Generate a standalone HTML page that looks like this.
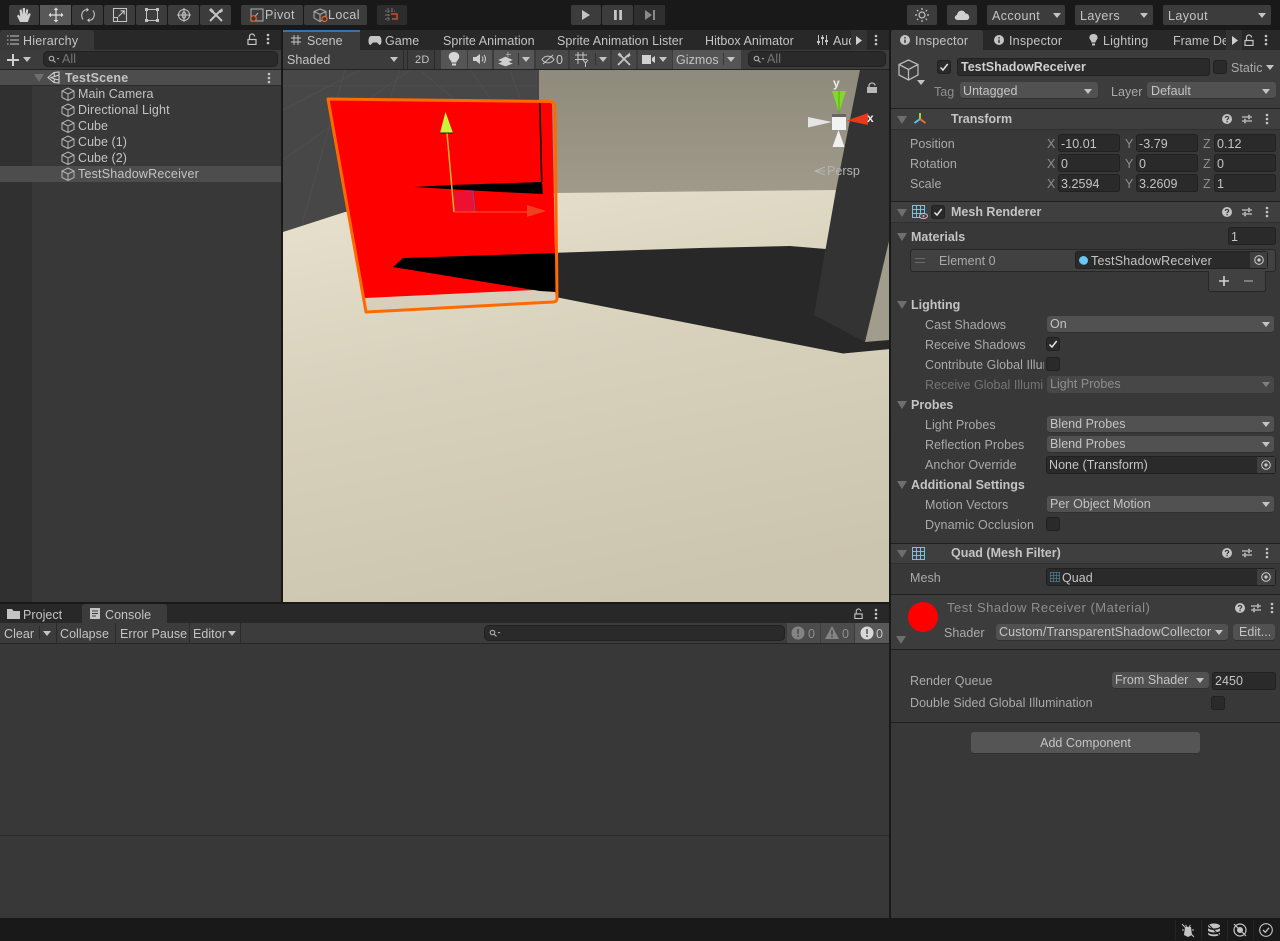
<!DOCTYPE html>
<html><head><meta charset="utf-8"><title>Unity Editor</title>
<style>
html,body{margin:0;padding:0;background:#191919}
#r{position:relative;width:1280px;height:941px;overflow:hidden;background:#191919;font-family:"Liberation Sans",sans-serif}
#r div,#r svg,#r span.a{position:absolute}
.t{position:absolute;white-space:nowrap;font-size:12.5px;line-height:16px;letter-spacing:.04px;color:#c4c4c4}
.w{letter-spacing:.42px}
.u{letter-spacing:.2px}
.b{font-weight:bold;letter-spacing:0}
.d{color:#757575}
.m{color:#8f8f8f}
.btn{background:#3c3c3c;border-radius:2px}
.dd{background:#515151;border-radius:3px;box-shadow:inset 0 -1px 0 #303030}
.fd{background:#2a2a2a;border-radius:3px;box-shadow:inset 0 0 0 1px #212121}
.cb{background:#2a2a2a;border-radius:3px;box-shadow:inset 0 0 0 1px #212121;width:14px;height:14px}
.c{width:0;height:0;border-left:4.5px solid transparent;border-right:4.5px solid transparent;border-top:5px solid #c4c4c4}
.f{width:0;height:0;border-left:5px solid transparent;border-right:5px solid transparent;border-top:8px solid #6e6e6e}
.ln{height:1px;background:#1f1f1f}
svg{overflow:visible}
</style></head><body><div id="r">
<svg width="0" height="0" style="left:0;top:0">
<defs>
<symbol id="cube" viewBox="0 0 14 14"><path d="M7 1 L13 4 V10.5 L7 13.5 L1 10.5 V4 Z M1 4 L7 7 L13 4 M7 7 V13.5" fill="none" stroke="#b8b8b8" stroke-width="1"/></symbol>
<symbol id="kb" viewBox="0 0 4 12"><circle cx="2" cy="2" r="1.3" fill="#c4c4c4"/><circle cx="2" cy="6" r="1.3" fill="#c4c4c4"/><circle cx="2" cy="10" r="1.3" fill="#c4c4c4"/></symbol>
<symbol id="lock" viewBox="0 0 12 12"><path d="M2 6.5h8v5H2z" fill="none" stroke="#c4c4c4" stroke-width="1.2"/><path d="M3.5 6.5V3.5a2.5 2.5 0 0 1 5 0" fill="none" stroke="#c4c4c4" stroke-width="1.2"/></symbol>
<symbol id="help" viewBox="0 0 10 10"><circle cx="5" cy="5" r="5" fill="#c4c4c4"/><path d="M3.3 3.8C3.4 1.9 6.8 2 6.7 3.9C6.6 5 5 5 5 6.2" fill="none" stroke="#383838" stroke-width="1.2"/><rect x="4.4" y="7" width="1.3" height="1.3" fill="#383838"/></symbol>
<symbol id="pre" viewBox="0 0 10 10"><path d="M0 3H6M8 3H10M0 7H2M4 7H10" stroke="#c4c4c4" stroke-width="1.2"/><path d="M7 .8V5.2M3 4.8V9.2" stroke="#c4c4c4" stroke-width="1.6"/></symbol>
<symbol id="pick" viewBox="0 0 10 10"><circle cx="5" cy="5" r="4.3" fill="none" stroke="#c4c4c4" stroke-width="1.1"/><circle cx="5" cy="5" r="1.7" fill="#c4c4c4"/></symbol>
<symbol id="mesh" viewBox="0 0 13 13"><path d="M.5.5h12v12H.5zM4.5.5v12M8.5.5v12M.5 4.5h12M.5 8.5h12" fill="none" stroke="#6cc4f5" stroke-width="1"/></symbol>
<symbol id="chk" viewBox="0 0 10 10"><path d="M1.5 5.5L4 8L8.7 2" fill="none" stroke="#e4e4e4" stroke-width="1.5"/></symbol>
<symbol id="srch" viewBox="0 0 12 8"><circle cx="3.5" cy="3.5" r="2.2" fill="none" stroke="#aaa" stroke-width="1.2"/><path d="M5 5L7.5 7.5" stroke="#aaa" stroke-width="1.2"/><path d="M8.5 3h3L10 4.6z" fill="#aaa"/></symbol>
</defs></svg>

<!-- Top toolbar -->
<div class="btn" style="left:9px;top:5px;width:30px;height:20px"></div>
<div style="left:40px;top:5px;width:31px;height:20px;background:#585858"></div>
<div class="btn" style="left:72px;top:5px;width:31px;height:20px"></div>
<div class="btn" style="left:104px;top:5px;width:31px;height:20px"></div>
<div class="btn" style="left:136px;top:5px;width:31px;height:20px"></div>
<div class="btn" style="left:168px;top:5px;width:31px;height:20px"></div>
<div class="btn" style="left:200px;top:5px;width:31px;height:20px"></div>
<svg style="left:16px;top:7px" width="16" height="16" viewBox="0 0 16 16"><path d="M4 15 L1 9 L2.500 7.500 L4.300 9.500 L3.500 3 L5.500 2.300 L6.500 7.500 L6.800 1 L9 1 L9.200 7.500 L10.500 2 L12.300 2.700 L11.300 8.800 L13 6 L14.800 7 L11.800 15 Z" fill="#d0d0d0"/></svg>
<svg style="left:48px;top:7px" width="16" height="16" viewBox="0 0 16 16"><path d="M8 0.5L10.3 3H5.7ZM8 15.5L5.7 13H10.3ZM.5 8L3 5.7V10.3ZM15.5 8L13 10.3V5.7Z" fill="#e0e0e0"/><path d="M8 3V13M3 8H13" stroke="#e0e0e0" stroke-width="1.2"/></svg>
<svg style="left:80px;top:7px" width="16" height="16" viewBox="0 0 16 16"><path d="M3 12.500C0 8 2.500 3 7 2.500M13 3.500C16 8 13.500 13 9 13.500" fill="none" stroke="#c4c4c4" stroke-width="1.100"/><path d="M6.500 .5L9 2.700L6.500 5ZM9.500 11L7 13.300L9.500 15.500Z" fill="#c4c4c4"/></svg>
<svg style="left:112px;top:7px" width="16" height="16" viewBox="0 0 16 16"><path d="M1.500 1.500H14.500V14.500H1.500Z M1.500 10.500H5.500V14.500" fill="none" stroke="#c4c4c4" stroke-width="1.100"/><path d="M6.500 9.500L12 4M8.500 3.800H12.200V7.500" fill="none" stroke="#c4c4c4" stroke-width="1.200"/></svg>
<svg style="left:145px;top:8px" width="14" height="14" viewBox="0 0 14 14"><path d="M1.500 1.500H12.500V12.500H1.500Z" fill="none" stroke="#c4c4c4"/><path d="M0 0h3v3H0zM11 0h3v3h-3zM0 11h3v3H0zM11 11h3v3h-3z" fill="#c4c4c4"/></svg>
<svg style="left:176px;top:7px" width="16" height="16" viewBox="0 0 16 16"><circle cx="8" cy="8" r="5.500" fill="none" stroke="#c4c4c4"/><path d="M8 1V15M1 8H15" stroke="#c4c4c4"/><path d="M8 4.500C10.500 6 10.500 10 8 11.500C5.500 10 5.500 6 8 4.500" fill="none" stroke="#c4c4c4"/></svg>
<svg style="left:208px;top:7px" width="16" height="16" viewBox="0 0 16 16"><path d="M2 14L13 3M3 3L14 14" stroke="#c4c4c4" stroke-width="2"/><path d="M1 3L3 1L6 4L4 6ZM11 5L14 1L15 4L12.500 6Z" fill="#c4c4c4"/></svg>

<div class="btn" style="left:241px;top:5px;width:62px;height:20px"></div>
<div class="btn" style="left:304px;top:5px;width:63px;height:20px"></div>
<svg style="left:250px;top:8px" width="14" height="14" viewBox="0 0 14 14"><path d="M1 1H13V13H1Z" fill="none" stroke="#b0b0b0"/><path d="M1 13L8 5" stroke="#b0b0b0"/><circle cx="3.500" cy="10.500" r="2.800" fill="#383838" stroke="#e8642c" stroke-width="1.200"/></svg>
<span class="t w" style="left:265px;top:7px">Pivot</span>
<svg style="left:313px;top:8px" width="16" height="15" viewBox="0 0 16 15"><path d="M7 1L13 3.500V10L7 13.500L1 10V3.500ZM1 3.500L7 6.500L13 3.500M7 6.500V13.500" fill="none" stroke="#b0b0b0"/><circle cx="11.500" cy="11" r="2.500" fill="#383838" stroke="#e8642c" stroke-width="1.200"/></svg>
<span class="t w" style="left:328px;top:7px">Local</span>
<div style="left:377px;top:5px;width:30px;height:20px;background:#2c2c2c;border-radius:2px"></div>
<svg style="left:385px;top:8px" width="14" height="14" viewBox="0 0 14 14"><path d="M3 0V13M7 0V4M0 3H10M0 7H5M0 11H5" stroke="#777" stroke-dasharray="2 1"/><path d="M6 6H12V11H7" fill="none" stroke="#c2542a" stroke-width="1.500"/></svg>

<div class="btn" style="left:571px;top:5px;width:30px;height:20px"></div>
<div class="btn" style="left:602px;top:5px;width:31px;height:20px"></div>
<div style="left:634px;top:5px;width:31px;height:20px;background:#2f2f2f"></div>
<svg style="left:581px;top:10px" width="10" height="10" viewBox="0 0 10 10"><path d="M1 0L9 5L1 10Z" fill="#c4c4c4"/></svg>
<svg style="left:613px;top:10px" width="10" height="10" viewBox="0 0 10 10"><path d="M1 0H3.800V10H1ZM6.200 0H9V10H6.200Z" fill="#c4c4c4"/></svg>
<svg style="left:645px;top:10px" width="11" height="10" viewBox="0 0 11 10"><path d="M0 0L7 5L0 10ZM8 0H10V10H8Z" fill="#8a8a8a"/></svg>

<div class="btn" style="left:907px;top:5px;width:30px;height:20px"></div>
<svg style="left:915px;top:8px" width="14" height="14" viewBox="0 0 14 14"><circle cx="7" cy="7" r="3" fill="none" stroke="#c4c4c4" stroke-width="1.200"/><path d="M7 0V2M7 12V14M0 7H2M12 7H14M2 2L3.300 3.300M10.700 10.700L12 12M2 12L3.300 10.700M10.700 3.300L12 2" stroke="#c4c4c4" stroke-width="1.200"/></svg>
<div class="btn" style="left:947px;top:5px;width:30px;height:20px"></div>
<svg style="left:954px;top:9px" width="16" height="11" viewBox="0 0 16 11"><path d="M3.500 11C0 11 0 6.500 3 6C3.500 1 10 0 11.500 4.500C15.500 4 17 11 12.500 11Z" fill="#d0d0d0"/></svg>
<div class="btn" style="left:987px;top:5px;width:78px;height:20px"></div>
<span class="t w" style="left:992px;top:8px">Account</span><div class="c" style="left:1053px;top:13px"></div>
<div class="btn" style="left:1075px;top:5px;width:78px;height:20px"></div>
<span class="t w" style="left:1080px;top:8px">Layers</span><div class="c" style="left:1140px;top:13px"></div>
<div class="btn" style="left:1163px;top:5px;width:108px;height:20px"></div>
<span class="t w" style="left:1168px;top:8px">Layout</span><div class="c" style="left:1258px;top:13px"></div>

<!-- Hierarchy panel -->
<div style="left:0;top:30px;width:281px;height:20px;background:#282828"></div>
<div style="left:0;top:30px;width:94px;height:20px;background:#383838;border-radius:3px 3px 0 0"></div>
<svg style="left:7px;top:35px" width="12" height="10" viewBox="0 0 12 10"><path d="M3 1H12M3 5H12M3 9H12M0 1H1.500M0 5H1.500M0 9H1.500" stroke="#c4c4c4"/></svg>
<span class="t u" style="left:23px;top:33px">Hierarchy</span>
<svg style="left:246px;top:33px" width="12" height="12"><use href="#lock"/></svg>
<svg style="left:266px;top:33px" width="4" height="12"><use href="#kb"/></svg>
<div style="left:0;top:50px;width:281px;height:20px;background:#3c3c3c"></div>
<div style="left:0;top:69px;width:281px;height:1px;background:#232323"></div>
<svg style="left:7px;top:54px" width="12" height="12" viewBox="0 0 12 12"><path d="M6 0V12M0 6H12" stroke="#d0d0d0" stroke-width="2"/></svg>
<div class="c" style="left:23px;top:57px;"></div>
<div class="fd" style="left:43px;top:51px;width:235px;height:16px;border-radius:5px"></div>
<svg style="left:48px;top:55px" width="12" height="8"><use href="#srch"/></svg>
<span class="t d" style="left:62px;top:51px">All</span>
<div style="left:0;top:70px;width:281px;height:532px;background:#383838"></div>
<div style="left:0;top:86px;width:32px;height:516px;background:#303030"></div>
<div style="left:0;top:70px;width:281px;height:15px;background:#4d4d4d"></div>
<div style="left:0;top:85px;width:281px;height:1px;background:#2a2a2a"></div>
<div style="left:0;top:166px;width:281px;height:16px;background:#4d4d4d"></div>
<div class="f" style="left:34px;top:74px"></div>
<svg style="left:47px;top:71px" width="13" height="13" viewBox="0 0 13 13"><path d="M1 6.500L7 1.500L12 1V12L7 11.500ZM7 1.500L7.500 5.500L12 4M7.500 5.500L4 6.500L7.500 8L12 9M7.500 8L7 11.500" fill="none" stroke="#d4d4d4" stroke-width="1.100"/></svg>
<span class="t b" style="left:65px;top:70px;letter-spacing:.2px">TestScene</span>
<svg style="left:267px;top:72px" width="4" height="12"><use href="#kb"/></svg>
<svg style="left:61px;top:87px" width="14" height="14"><use href="#cube"/></svg><span class="t" style="left:78px;top:86px">Main Camera</span>
<svg style="left:61px;top:103px" width="14" height="14"><use href="#cube"/></svg><span class="t" style="left:78px;top:102px;letter-spacing:.12px">Directional Light</span>
<svg style="left:61px;top:119px" width="14" height="14"><use href="#cube"/></svg><span class="t" style="left:78px;top:118px">Cube</span>
<svg style="left:61px;top:135px" width="14" height="14"><use href="#cube"/></svg><span class="t" style="left:78px;top:134px">Cube (1)</span>
<svg style="left:61px;top:151px" width="14" height="14"><use href="#cube"/></svg><span class="t" style="left:78px;top:150px">Cube (2)</span>
<svg style="left:61px;top:167px" width="14" height="14"><use href="#cube"/></svg><span class="t u" style="left:78px;top:166px">TestShadowReceiver</span>

<!-- Scene tabs -->
<div style="left:283px;top:30px;width:606px;height:20px;background:#282828"></div>
<div style="left:283px;top:30px;width:77px;height:20px;background:#3c3c3c;border-top:2px solid #3a72b0;box-sizing:border-box"></div>
<svg style="left:291px;top:35px" width="10" height="10" viewBox="0 0 10 10"><path d="M3 0V10M7 0V10M0 3H10M0 7H10" stroke="#c4c4c4"/></svg>
<span class="t" style="left:307px;top:33px">Scene</span>
<svg style="left:368px;top:36px" width="14" height="9" viewBox="0 0 14 9"><path d="M3 0H11C14 0 14.500 9 11.500 9L9 6.500H5L2.500 9C-.5 9 0 0 3 0Z" fill="#c4c4c4"/></svg>
<span class="t" style="left:385px;top:33px">Game</span>
<span class="t" style="left:443px;top:33px">Sprite Animation</span>
<span class="t" style="left:557px;top:33px">Sprite Animation Lister</span>
<span class="t" style="left:705px;top:33px">Hitbox Animator</span>
<svg style="left:817px;top:35px" width="11" height="10" viewBox="0 0 11 10"><path d="M1.500 0V10M5.500 0V10M9.500 0V10" stroke="#c4c4c4"/><path d="M0 6H3V8H0ZM4 2H7V4H4ZM8 5H11V7H8Z" fill="#c4c4c4"/></svg>
<span class="t" style="left:833px;top:33px;width:18px;overflow:hidden">Audio</span>
<div style="left:851px;top:30px;width:16px;height:20px;background:#333"></div>
<svg style="left:856px;top:36px" width="6" height="9" viewBox="0 0 6 9"><path d="M0 0L6 4.500L0 9Z" fill="#d0d0d0"/></svg>
<svg style="left:874px;top:34px" width="4" height="12"><use href="#kb"/></svg>

<!-- Scene toolbar -->
<div style="left:283px;top:50px;width:606px;height:20px;background:#3c3c3c"></div>
<span class="t" style="left:287px;top:52px">Shaded</span><div class="c" style="left:390px;top:57px"></div>
<div style="left:403px;top:50px;width:1px;height:19px;background:#2a2a2a"></div>
<div style="left:407px;top:50px;width:28px;height:19px;background:#3c3c3c;border-left:1px solid #2a2a2a;border-right:1px solid #2a2a2a;box-sizing:border-box"></div>
<span class="t" style="left:415px;top:52px;font-size:11px;letter-spacing:.2px">2D</span>
<div style="left:441px;top:50px;width:26px;height:19px;background:#555"></div>
<svg style="left:448px;top:52px" width="12" height="14" viewBox="0 0 12 14"><path d="M6 0C2 0 0 3 1 6C1.500 8 3.500 8.500 3.500 10.500H8.500C8.500 8.500 10.500 8 11 6C12 3 10 0 6 0ZM4 11.500H8V13.500H4Z" fill="#d6d6d6"/></svg>
<div style="left:468px;top:50px;width:24px;height:19px;background:#555"></div>
<svg style="left:473px;top:53px" width="14" height="12" viewBox="0 0 14 12"><path d="M0 4H3L7 1V11L3 8H0Z" fill="#d0d0d0"/><path d="M9 3.500Q11 6 9 8.500M11 2Q14 6 11 10" fill="none" stroke="#d0d0d0"/></svg>
<div style="left:494px;top:50px;width:40px;height:19px;background:#555"></div>
<svg style="left:498px;top:52px" width="15" height="14" viewBox="0 0 15 14"><path d="M7.500 5L14 8L7.500 11L1 8ZM7.500 9L14 11.500L7.500 14L1 11.500Z M10 0V5M8 2.500H13" fill="#d0d0d0" stroke="#d0d0d0" stroke-width=".6"/></svg>
<div style="left:518px;top:53px;width:1px;height:12px;background:#333"></div>
<div class="c" style="left:522px;top:57px"></div>
<div style="left:536px;top:50px;width:32px;height:19px;background:#484848"></div>
<svg style="left:541px;top:54px" width="14" height="11" viewBox="0 0 14 11"><path d="M1 5.500C4 1 10 1 13 5.500C10 10 4 10 1 5.500Z" fill="none" stroke="#c4c4c4"/><path d="M2 10L12 1" stroke="#c4c4c4"/></svg>
<span class="t" style="left:556px;top:52px">0</span>
<div style="left:570px;top:50px;width:40px;height:19px;background:#484848"></div>
<svg style="left:575px;top:52px" width="14" height="15" viewBox="0 0 14 15"><path d="M3 0V12M8 0V8M0 3H12M0 7.500H12" stroke="#c4c4c4"/><path d="M8 8L10.500 11L13 8M10.500 11V15" fill="none" stroke="#c4c4c4"/></svg>
<div style="left:595px;top:53px;width:1px;height:12px;background:#333"></div>
<div class="c" style="left:599px;top:57px"></div>
<div style="left:612px;top:50px;width:24px;height:19px;background:#484848"></div>
<svg style="left:617px;top:52px" width="14" height="14" viewBox="0 0 14 14"><path d="M1 13L11 3M2 2L13 13" stroke="#c4c4c4" stroke-width="1.800"/><path d="M.5 2.500L2.500 .5L5 3L3 5ZM9.500 4L12.500 .5L13.500 3.500L11 5.500Z" fill="#c4c4c4"/></svg>
<div style="left:638px;top:50px;width:34px;height:19px;background:#484848"></div>
<svg style="left:642px;top:55px" width="13" height="9" viewBox="0 0 13 9"><path d="M0 0H9V9H0ZM10 3L13 1V8L10 6Z" fill="#d0d0d0"/></svg>
<div class="c" style="left:659px;top:57px"></div>
<div style="left:673px;top:50px;width:68px;height:19px;background:#555"></div>
<span class="t" style="left:676px;top:52px">Gizmos</span>
<div style="left:723px;top:53px;width:1px;height:12px;background:#383838"></div>
<div class="c" style="left:727px;top:57px"></div>
<div class="fd" style="left:748px;top:51px;width:138px;height:16px;border-radius:5px"></div>
<svg style="left:753px;top:55px" width="12" height="8"><use href="#srch"/></svg>
<span class="t d" style="left:767px;top:51px">All</span>
<div style="left:283px;top:69px;width:606px;height:1px;background:#232323"></div>

<!-- Scene view -->
<svg style="left:283px;top:70px" width="606" height="532" viewBox="283 70 606 532">
<defs>
<linearGradient id="fl" x1="0.300" y1="0" x2="0.600" y2="1"><stop offset="0" stop-color="#e5dfcb"/><stop offset=".4" stop-color="#d8d1bc"/><stop offset="1" stop-color="#cbc4ae"/></linearGradient>
<linearGradient id="wl" x1="0" y1="0" x2="0" y2="1"><stop offset="0" stop-color="#8f8b7c"/><stop offset="1" stop-color="#a09b8b"/></linearGradient>
<clipPath id="sc"><rect x="283" y="70" width="606" height="532"/></clipPath>
</defs>
<g clip-path="url(#sc)">
<rect x="283" y="70" width="606" height="532" fill="#474747"/>
<path d="M300 232L345 70M345 232L400 70M283 160L410 70M283 110L360 70M420 70L455 100M470 70L490 98M510 70L520 98M283 86L540 86" stroke="#4e4e4e" stroke-width="1" fill="none"/>
<path d="M539 70H860L836 191L555 194L539 200Z" fill="url(#wl)"/>
<path d="M283 232L345 212L555 193L836 190L890 200V602H283Z" fill="url(#fl)"/>
<path d="M550 253L700 248L790 246L826 249L890 240V349L843 353.500L540 294Z" fill="#282828"/>
<path d="M860 70H889V241L865 342L814 315L836 190Z" fill="#333"/>
<path d="M889 241L865 342L889 340Z" fill="#a19d8d"/>
<!-- quad -->
<path d="M327 99L552 102L556 302L365 311Z" fill="#f00"/>
<path d="M365 298L555 289L556 302L367 311Z" fill="#d6cfbb"/>
<path d="M393 267L403 258L556 253V292L540 291Z" fill="#000"/>
<path d="M414 187L450 185L542 182L543 194L500 192Z" fill="#000"/>
<path d="M539 101H540.500L542.500 182H541Z" fill="#000"/>
<path d="M328 99L550 101.500Q555 102 555 108L557 298Q557 302 553 302L366 312Z" fill="none" stroke="#ff6a00" stroke-width="3" stroke-linejoin="round"/>
<!-- transform gizmo -->
<path d="M453.500 191H473L475 212H454.500Z" fill="#ee1030"/>
<path d="M465 191H473L475 212" fill="none" stroke="#5a58c8" stroke-width=".8"/>
<path d="M454 212L447 133" stroke="#e8b028" stroke-width="1.500"/>
<path d="M445.500 112L440 133H453Z" fill="#c8f43c"/>
<path d="M440 133H453" stroke="#222" stroke-width="1"/>
<path d="M454 212H528" stroke="#ff3a1c" stroke-width="1.500"/>
<path d="M527 205L546 211L527 217Z" fill="#f04020"/>
<!-- view gizmo -->
<path d="M832 91H846L839 113Z" fill="#7fd82a"/>
<path d="M839 91V113" stroke="#5ea81c"/>
<path d="M808 117L832 122L808 127.500Z" fill="#e4e4e4"/>
<path d="M868 113L847 120.500L868 125Z" fill="#e8391a"/>
<path d="M838.500 130L832.500 147H844.500Z" fill="#f0f0f0"/>
<rect x="832" y="116" width="14" height="14" fill="#f2f2f2"/>
<rect x="832" y="114" width="14" height="3" fill="#666"/>
</g>
</svg>
<span class="t" style="left:833px;top:75px;font-weight:bold;color:#eee;font-size:12px">y</span>
<span class="t" style="left:867px;top:110px;font-weight:bold;color:#eee;font-size:12px">x</span>
<svg style="left:867px;top:83px" width="10" height="10" viewBox="0 0 10 10"><path d="M0 4H10V10H0Z" fill="#b8b8b8"/><path d="M2 4V2.500A3 2.500 0 0 1 8 2.500" fill="none" stroke="#b8b8b8" stroke-width="1.300"/></svg>
<svg style="left:814px;top:166px" width="12" height="10" viewBox="0 0 12 10"><path d="M11 1L1 5L11 9M1 5H11" fill="none" stroke="#b5b5b5"/></svg>
<span class="t" style="left:827px;top:163px;color:#b5b5b5">Persp</span>

<!-- Bottom console panel -->
<div style="left:0;top:604px;width:889px;height:19px;background:#282828"></div>
<div style="left:82px;top:604px;width:85px;height:19px;background:#3c3c3c;border-radius:3px 3px 0 0"></div>
<svg style="left:7px;top:609px" width="13" height="10" viewBox="0 0 13 10"><path d="M0 0H5L6.500 2H13V10H0Z" fill="#c4c4c4"/></svg>
<span class="t" style="left:23px;top:607px">Project</span>
<svg style="left:90px;top:608px" width="10" height="11" viewBox="0 0 10 11"><path d="M0 0H10V11H0Z" fill="#c4c4c4"/><path d="M2 3H8M2 5.500H8M2 8H6" stroke="#3c3c3c"/></svg>
<span class="t" style="left:105px;top:607px">Console</span>
<svg style="left:853px;top:608px" width="11" height="11"><use href="#lock"/></svg>
<svg style="left:874px;top:608px" width="4" height="12"><use href="#kb"/></svg>
<div style="left:0;top:623px;width:889px;height:21px;background:#3c3c3c"></div>
<div style="left:0;top:643px;width:889px;height:1px;background:#262626"></div>
<div style="left:0;top:644px;width:889px;height:274px;background:#383838"></div>
<div style="left:0;top:835px;width:889px;height:1px;background:#2a2a2a"></div>
<span class="t" style="left:4px;top:626px">Clear</span>
<div style="left:39px;top:626px;width:1px;height:13px;background:#2a2a2a"></div>
<div class="c" style="left:43px;top:631px"></div>
<div style="left:56px;top:623px;width:1px;height:20px;background:#2a2a2a"></div>
<span class="t" style="left:60px;top:626px">Collapse</span>
<div style="left:115px;top:623px;width:1px;height:20px;background:#2a2a2a"></div>
<span class="t" style="left:120px;top:626px">Error Pause</span>
<div style="left:189px;top:623px;width:1px;height:20px;background:#2a2a2a"></div>
<span class="t" style="left:193px;top:626px">Editor</span>
<div class="c" style="left:228px;top:631px"></div>
<div style="left:240px;top:623px;width:1px;height:20px;background:#2a2a2a"></div>
<div class="fd" style="left:484px;top:625px;width:301px;height:16px;border-radius:5px"></div>
<svg style="left:489px;top:629px" width="12" height="8"><use href="#srch"/></svg>
<div style="left:787px;top:623px;width:33px;height:20px;background:#4c4c4c"></div>
<div style="left:821px;top:623px;width:33px;height:20px;background:#4c4c4c"></div>
<div style="left:855px;top:623px;width:34px;height:20px;background:#585858"></div>
<svg style="left:791px;top:626px" width="14" height="14" viewBox="0 0 14 14"><circle cx="7" cy="7" r="6.500" fill="#848484"/><path d="M6.200 3H7.800V8H6.200ZM6.200 9.300H7.800V11H6.200Z" fill="#4c4c4c"/></svg>
<span class="t m" style="left:808px;top:626px">0</span>
<svg style="left:825px;top:626px" width="14" height="13" viewBox="0 0 14 13"><path d="M7 0L14 13H0Z" fill="#848484"/><path d="M6.200 4H7.800V8.500H6.200ZM6.200 9.800H7.800V11.500H6.200Z" fill="#4c4c4c"/></svg>
<span class="t m" style="left:842px;top:626px">0</span>
<svg style="left:860px;top:626px" width="14" height="14" viewBox="0 0 14 14"><circle cx="7" cy="7" r="6.500" fill="#d8d8d8"/><path d="M6.200 3H7.800V8H6.200ZM6.200 9.300H7.800V11H6.200Z" fill="#585858"/></svg>
<span class="t" style="left:876px;top:626px">0</span>

<!-- Inspector -->
<div style="left:891px;top:30px;width:389px;height:20px;background:#282828"></div>
<div style="left:891px;top:30px;width:92px;height:20px;background:#3c3c3c;border-radius:3px 3px 0 0"></div>
<div style="left:891px;top:50px;width:389px;height:868px;background:#3c3c3c"></div>
<svg style="left:900px;top:35px" width="10" height="10" viewBox="0 0 10 10"><circle cx="5" cy="5" r="5" fill="#c4c4c4"/><path d="M4.300 2H5.700V3.500H4.300ZM4.300 4.500H5.700V8H4.300Z" fill="#333"/></svg>
<span class="t u" style="left:915px;top:33px">Inspector</span>
<svg style="left:994px;top:35px" width="10" height="10" viewBox="0 0 10 10"><circle cx="5" cy="5" r="5" fill="#c4c4c4"/><path d="M4.300 2H5.700V3.500H4.300ZM4.300 4.500H5.700V8H4.300Z" fill="#333"/></svg>
<span class="t u" style="left:1009px;top:33px">Inspector</span>
<svg style="left:1089px;top:34px" width="9" height="12" viewBox="0 0 9 12"><path d="M4.500 0C1.500 0 0 2 .5 4.500C1 6 2.500 6.500 2.500 8.500H6.500C6.500 6.500 8 6 8.500 4.500C9 2 7.500 0 4.500 0ZM3 9.500H6V11.500H3Z" fill="#c4c4c4"/></svg>
<span class="t u" style="left:1103px;top:33px">Lighting</span>
<span class="t" style="left:1173px;top:33px;width:53px;overflow:hidden">Frame Debugger</span>
<div style="left:1226px;top:30px;width:16px;height:20px;background:#333"></div>
<svg style="left:1232px;top:36px" width="6" height="9" viewBox="0 0 6 9"><path d="M0 0L6 4.500L0 9Z" fill="#d0d0d0"/></svg>
<svg style="left:1243px;top:34px" width="12" height="12"><use href="#lock"/></svg>
<svg style="left:1264px;top:34px" width="4" height="12"><use href="#kb"/></svg>

<svg style="left:898px;top:59px" width="21" height="22" viewBox="0 0 21 22"><path d="M10.500 1L20 5.500V16L10.500 21L1 16V5.500ZM1 5.500L10.500 10.500L20 5.500M10.500 10.500V21" fill="none" stroke="#b8b8b8" stroke-width="1.300"/></svg>
<div class="c" style="left:917px;top:80px"></div>
<div class="cb" style="left:937px;top:60px"></div>
<svg style="left:939px;top:62px" width="10" height="10"><use href="#chk"/></svg>
<div class="fd" style="left:957px;top:58px;width:253px;height:18px"></div>
<span class="t b" style="left:961px;top:59px;color:#d0d0d0">TestShadowReceiver</span>
<div class="cb" style="left:1213px;top:60px"></div>
<span class="t" style="left:1231px;top:60px;color:#aaa">Static</span>
<div class="c" style="left:1266px;top:65px"></div>
<span class="t m" style="left:934px;top:84px">Tag</span>
<div class="dd" style="left:960px;top:82px;width:138px;height:17px"></div>
<span class="t" style="left:963px;top:83px">Untagged</span><div class="c" style="left:1084px;top:89px"></div>
<span class="t" style="left:1111px;top:84px;color:#aaa">Layer</span>
<div class="dd" style="left:1147px;top:82px;width:129px;height:17px"></div>
<span class="t" style="left:1151px;top:83px">Default</span><div class="c" style="left:1262px;top:89px"></div>

<!-- Transform -->
<div class="ln" style="left:891px;top:108px;width:389px"></div>
<div style="left:891px;top:109px;width:389px;height:20px;background:#3f3f3f"></div>
<div style="left:891px;top:129px;width:389px;height:1px;background:#2f2f2f"></div>
<div style="left:891px;top:130px;width:389px;height:71px;background:#383838"></div>
<div class="f" style="left:897px;top:116px"></div>
<svg style="left:913px;top:112px" width="14" height="14" viewBox="0 0 14 14"><path d="M7 7V1" stroke="#9ad43c" stroke-width="2"/><path d="M7 7L1.500 11" stroke="#5ec0f0" stroke-width="2"/><path d="M7 7L12.500 11" stroke="#f06a30" stroke-width="2"/></svg>
<span class="t b" style="left:951px;top:111px">Transform</span>
<svg style="left:1222px;top:114px" width="10" height="10"><use href="#help"/></svg>
<svg style="left:1242px;top:114px" width="10" height="10"><use href="#pre"/></svg>
<svg style="left:1265px;top:113px" width="4" height="12"><use href="#kb"/></svg>
<span class="t" style="left:910px;top:136px;color:#aaa">Position</span>
<span class="t" style="left:910px;top:156px;color:#aaa">Rotation</span>
<span class="t" style="left:910px;top:176px;color:#aaa">Scale</span>
<span class="t m" style="left:1047px;top:136px">X</span><div class="fd" style="left:1058px;top:134px;width:62px;height:18px"></div><span class="t" style="left:1061px;top:136px">-10.01</span>
<span class="t m" style="left:1125px;top:136px">Y</span><div class="fd" style="left:1136px;top:134px;width:62px;height:18px"></div><span class="t" style="left:1139px;top:136px">-3.79</span>
<span class="t m" style="left:1203px;top:136px">Z</span><div class="fd" style="left:1214px;top:134px;width:62px;height:18px"></div><span class="t" style="left:1217px;top:136px">0.12</span>
<span class="t m" style="left:1047px;top:156px">X</span><div class="fd" style="left:1058px;top:154px;width:62px;height:18px"></div><span class="t" style="left:1061px;top:156px">0</span>
<span class="t m" style="left:1125px;top:156px">Y</span><div class="fd" style="left:1136px;top:154px;width:62px;height:18px"></div><span class="t" style="left:1139px;top:156px">0</span>
<span class="t m" style="left:1203px;top:156px">Z</span><div class="fd" style="left:1214px;top:154px;width:62px;height:18px"></div><span class="t" style="left:1217px;top:156px">0</span>
<span class="t m" style="left:1047px;top:176px">X</span><div class="fd" style="left:1058px;top:174px;width:62px;height:18px"></div><span class="t" style="left:1061px;top:176px">3.2594</span>
<span class="t m" style="left:1125px;top:176px">Y</span><div class="fd" style="left:1136px;top:174px;width:62px;height:18px"></div><span class="t" style="left:1139px;top:176px">3.2609</span>
<span class="t m" style="left:1203px;top:176px">Z</span><div class="fd" style="left:1214px;top:174px;width:62px;height:18px"></div><span class="t" style="left:1217px;top:176px">1</span>

<!-- Mesh renderer -->
<div class="ln" style="left:891px;top:201px;width:389px"></div>
<div style="left:891px;top:202px;width:389px;height:20px;background:#3f3f3f"></div>
<div style="left:891px;top:222px;width:389px;height:1px;background:#2f2f2f"></div>
<div style="left:891px;top:223px;width:389px;height:320px;background:#383838"></div>
<div class="f" style="left:897px;top:209px"></div>
<svg style="left:912px;top:205px" width="13" height="13"><use href="#mesh"/></svg>
<svg style="left:919px;top:213px" width="9" height="6" viewBox="0 0 9 6"><ellipse cx="4.500" cy="3" rx="4" ry="2.500" fill="#3f3f3f" stroke="#c4c4c4"/><circle cx="4.500" cy="3" r="1" fill="#c4c4c4"/></svg>
<div class="cb" style="left:931px;top:205px"></div>
<svg style="left:933px;top:207px" width="10" height="10"><use href="#chk"/></svg>
<span class="t b" style="left:951px;top:204px">Mesh Renderer</span>
<svg style="left:1222px;top:207px" width="10" height="10"><use href="#help"/></svg>
<svg style="left:1242px;top:207px" width="10" height="10"><use href="#pre"/></svg>
<svg style="left:1265px;top:206px" width="4" height="12"><use href="#kb"/></svg>
<div class="f" style="left:897px;top:233px"></div>
<span class="t b" style="left:911px;top:229px">Materials</span>
<div class="fd" style="left:1228px;top:227px;width:48px;height:18px"></div>
<span class="t" style="left:1231px;top:229px">1</span>
<div style="left:910px;top:249px;width:366px;height:23px;background:#414141;box-sizing:border-box;border:1px solid #262626;border-radius:3px"></div>
<div style="left:915px;top:258px;width:10px;height:1px;background:#6a6a6a"></div>
<div style="left:915px;top:262px;width:10px;height:1px;background:#6a6a6a"></div>
<span class="t" style="left:939px;top:253px;color:#aaa">Element 0</span>
<div class="fd" style="left:1075px;top:251px;width:193px;height:18px"></div>
<div style="left:1250px;top:252px;width:17px;height:16px;background:#3f3f3f"></div>
<svg style="left:1254px;top:255px" width="10" height="10"><use href="#pick"/></svg>
<svg style="left:1079px;top:256px" width="9" height="9" viewBox="0 0 9 9"><circle cx="4.500" cy="4.500" r="4.500" fill="#6ac6f5"/><path d="M0 5A4.500 4.500 0 0 0 6 8.700A6 6 0 0 1 0 5Z" fill="#24506a"/></svg>
<span class="t u" style="left:1091px;top:253px">TestShadowReceiver</span>
<div style="left:1208px;top:271px;width:58px;height:21px;background:#414141;box-sizing:border-box;border:1px solid #262626;border-top:none;border-radius:0 0 3px 3px"></div>
<svg style="left:1219px;top:276px" width="10" height="10" viewBox="0 0 10 10"><path d="M5 0V10M0 5H10" stroke="#d4d4d4" stroke-width="1.600"/></svg>
<div style="left:1244px;top:280px;width:9px;height:1.500px;background:#7d7d7d"></div>

<div class="f" style="left:897px;top:301px"></div>
<span class="t b" style="left:911px;top:297px">Lighting</span>
<span class="t" style="left:925px;top:317px;color:#aaa">Cast Shadows</span>
<div class="dd" style="left:1047px;top:316px;width:227px;height:17px"></div>
<span class="t" style="left:1050px;top:316px">On</span><div class="c" style="left:1262px;top:322px"></div>
<span class="t" style="left:925px;top:337px;color:#aaa">Receive Shadows</span>
<div class="cb" style="left:1046px;top:337px"></div>
<svg style="left:1048px;top:339px" width="10" height="10"><use href="#chk"/></svg>
<span class="t" style="left:925px;top:357px;color:#aaa;width:119px;overflow:hidden">Contribute Global Illumination</span>
<div class="cb" style="left:1046px;top:357px"></div>
<span class="t d" style="left:925px;top:377px;width:119px;overflow:hidden">Receive Global Illumination</span>
<div style="left:1047px;top:376px;width:227px;height:17px;background:#474747;border-radius:3px"></div>
<span class="t m" style="left:1050px;top:376px">Light Probes</span><div class="c" style="left:1262px;top:382px;border-top-color:#808080"></div>

<div class="f" style="left:897px;top:401px"></div>
<span class="t b" style="left:911px;top:397px">Probes</span>
<span class="t" style="left:925px;top:417px;color:#aaa">Light Probes</span>
<div class="dd" style="left:1047px;top:416px;width:227px;height:17px"></div>
<span class="t" style="left:1050px;top:416px">Blend Probes</span><div class="c" style="left:1262px;top:422px"></div>
<span class="t" style="left:925px;top:437px;color:#aaa">Reflection Probes</span>
<div class="dd" style="left:1047px;top:436px;width:227px;height:17px"></div>
<span class="t" style="left:1050px;top:436px">Blend Probes</span><div class="c" style="left:1262px;top:442px"></div>
<span class="t" style="left:925px;top:457px;color:#aaa">Anchor Override</span>
<div class="fd" style="left:1046px;top:456px;width:230px;height:18px"></div>
<div style="left:1257px;top:457px;width:18px;height:16px;background:#3f3f3f"></div>
<svg style="left:1261px;top:460px" width="10" height="10"><use href="#pick"/></svg>
<span class="t" style="left:1049px;top:457px">None (Transform)</span>

<div class="f" style="left:897px;top:481px"></div>
<span class="t b" style="left:911px;top:477px">Additional Settings</span>
<span class="t" style="left:925px;top:497px;color:#aaa">Motion Vectors</span>
<div class="dd" style="left:1047px;top:496px;width:227px;height:17px"></div>
<span class="t" style="left:1050px;top:496px">Per Object Motion</span><div class="c" style="left:1262px;top:502px"></div>
<span class="t" style="left:925px;top:517px;color:#aaa;letter-spacing:.12px">Dynamic Occlusion</span>
<div class="cb" style="left:1046px;top:517px"></div>

<!-- Mesh filter -->
<div class="ln" style="left:891px;top:543px;width:389px"></div>
<div style="left:891px;top:544px;width:389px;height:19px;background:#3f3f3f"></div>
<div style="left:891px;top:563px;width:389px;height:1px;background:#2f2f2f"></div>
<div style="left:891px;top:564px;width:389px;height:30px;background:#383838"></div>
<div class="f" style="left:897px;top:550px"></div>
<svg style="left:912px;top:547px" width="13" height="13"><use href="#mesh"/></svg>
<span class="t b" style="left:951px;top:545px">Quad (Mesh Filter)</span>
<svg style="left:1222px;top:548px" width="10" height="10"><use href="#help"/></svg>
<svg style="left:1242px;top:548px" width="10" height="10"><use href="#pre"/></svg>
<svg style="left:1265px;top:547px" width="4" height="12"><use href="#kb"/></svg>
<span class="t" style="left:910px;top:570px;color:#aaa">Mesh</span>
<div class="fd" style="left:1046px;top:568px;width:230px;height:18px"></div>
<div style="left:1257px;top:569px;width:18px;height:16px;background:#3f3f3f"></div>
<svg style="left:1261px;top:572px" width="10" height="10"><use href="#pick"/></svg>
<svg style="left:1050px;top:572px" width="10" height="10" viewBox="0 0 13 13"><path d="M.5.5h12v12H.5zM4.500.5v12M8.500.5v12M.5 4.500h12M.5 8.500h12" fill="none" stroke="#4f7a92"/></svg>
<span class="t" style="left:1062px;top:570px">Quad</span>

<!-- Material -->
<div class="ln" style="left:891px;top:594px;width:389px"></div>
<div style="left:891px;top:595px;width:389px;height:54px;background:#3c3c3c"></div>
<div class="ln" style="left:891px;top:649px;width:389px"></div>
<div style="left:891px;top:650px;width:389px;height:72px;background:#383838"></div>
<div style="left:908px;top:602px;width:30px;height:30px;border-radius:50%;background:#f00"></div>
<div class="f" style="left:896px;top:636px"></div>
<span class="t" style="left:947px;top:600px;color:#8e8e8e;font-size:13px;letter-spacing:.5px">Test Shadow Receiver (Material)</span>
<svg style="left:1235px;top:603px" width="10" height="10"><use href="#help"/></svg>
<svg style="left:1251px;top:603px" width="10" height="10"><use href="#pre"/></svg>
<svg style="left:1270px;top:602px" width="4" height="12"><use href="#kb"/></svg>
<span class="t" style="left:944px;top:625px;color:#aaa">Shader</span>
<div class="dd" style="left:996px;top:624px;width:232px;height:17px"></div>
<span class="t" style="left:999px;top:624px;letter-spacing:.13px">Custom/TransparentShadowCollector</span><div class="c" style="left:1215px;top:630px"></div>
<div class="dd" style="left:1233px;top:624px;width:42px;height:17px"></div>
<span class="t" style="left:1239px;top:624px">Edit...</span>
<span class="t" style="left:910px;top:673px;color:#aaa">Render Queue</span>
<div class="dd" style="left:1112px;top:672px;width:97px;height:17px"></div>
<span class="t" style="left:1115px;top:672px">From Shader</span><div class="c" style="left:1196px;top:678px"></div>
<div class="fd" style="left:1212px;top:672px;width:64px;height:18px"></div>
<span class="t" style="left:1215px;top:673px">2450</span>
<span class="t" style="left:910px;top:695px;color:#aaa">Double Sided Global Illumination</span>
<div class="cb" style="left:1211px;top:696px"></div>
<div class="ln" style="left:891px;top:722px;width:389px"></div>
<div style="left:891px;top:723px;width:389px;height:195px;background:#383838"></div>
<div style="left:971px;top:732px;width:229px;height:22px;background:#555;border-radius:3px;box-shadow:inset 0 -1px 0 #303030"></div>
<span class="t" style="left:971px;top:735px;width:229px;text-align:center">Add Component</span>

<!-- Vertical splitters -->
<div style="left:281px;top:30px;width:2px;height:572px;background:#191919"></div>
<div style="left:889px;top:30px;width:2px;height:888px;background:#191919"></div>
<div style="left:0;top:602px;width:889px;height:2px;background:#191919"></div>

<!-- Status bar -->
<div style="left:0;top:918px;width:1280px;height:23px;background:#191919"></div>
<div style="left:1175px;top:920px;width:1px;height:20px;background:#252525"></div>
<div style="left:1201px;top:920px;width:1px;height:20px;background:#252525"></div>
<div style="left:1227px;top:920px;width:1px;height:20px;background:#252525"></div>
<div style="left:1253px;top:920px;width:1px;height:20px;background:#252525"></div>
<svg style="left:1181px;top:923px" width="14" height="15" viewBox="0 0 14 15"><path d="M4 4H10L11 12L7 14L3 12Z" fill="#c4c4c4"/><path d="M1 1L13 14M4.500 2L6 4M9.500 2L8 4M1 7H3M11 7H13" stroke="#c4c4c4"/></svg>
<svg style="left:1207px;top:923px" width="14" height="14" viewBox="0 0 14 14"><ellipse cx="7" cy="3" rx="6" ry="2.500" fill="#c4c4c4"/><path d="M1 5C2 7.500 12 7.500 13 5V7.500C12 10 2 10 1 7.500ZM1 9.500C2 12 12 12 13 9.500V11C12 14 2 14 1 11Z" fill="#c4c4c4"/><path d="M1 1L13 13" stroke="#191919"/></svg>
<svg style="left:1233px;top:923px" width="14" height="14" viewBox="0 0 14 14"><circle cx="7" cy="7" r="6" fill="none" stroke="#c4c4c4" stroke-width="1.200"/><circle cx="7" cy="7" r="3" fill="#c4c4c4"/><path d="M1 1L13 13" stroke="#c4c4c4" stroke-width="1.200"/></svg>
<svg style="left:1259px;top:923px" width="14" height="14" viewBox="0 0 14 14"><circle cx="7" cy="7" r="6.300" fill="none" stroke="#c4c4c4" stroke-width="1.100"/><path d="M4 7L6.300 9.300L10 4.800" fill="none" stroke="#c4c4c4" stroke-width="1.300"/></svg>
</div></body></html>
